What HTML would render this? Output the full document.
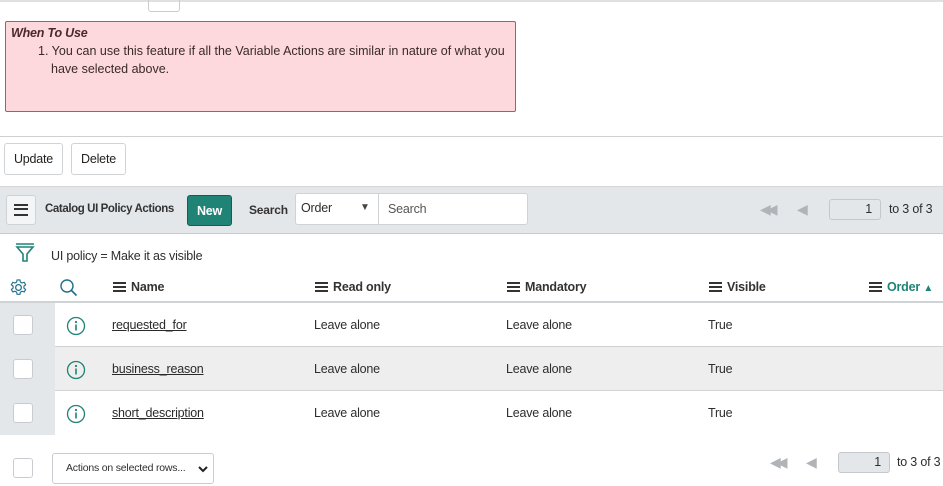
<!DOCTYPE html>
<html><head><meta charset="utf-8"><style>
*{box-sizing:border-box;margin:0;padding:0}
body{width:943px;height:486px;overflow:hidden;background:#fff;font-family:"Liberation Sans",sans-serif;font-size:12px;color:#2e2e2e;position:relative;letter-spacing:-0.2px}
.a{position:absolute}
.btn{position:absolute;border:1px solid #cfd3d6;border-radius:3px;background:#fff;font-size:12.5px;display:flex;align-items:center;justify-content:center;color:#222}
.cb{position:absolute;width:20px;height:20px;border:1px solid #c8ccd0;border-radius:3px;background:#fff}
.ham{display:inline-block;width:13px;height:10px;border-top:2px solid #333;border-bottom:2px solid #333;position:relative;vertical-align:-1px;margin-right:5px}
.ham:after{content:"";position:absolute;left:0;right:0;top:2px;border-top:2px solid #333}
.row{position:absolute;left:0;width:943px;height:44px;border-bottom:1px solid #cfd3d6}
.row span{position:absolute;top:15px;font-size:12.5px}
.lnk{text-decoration:underline;color:#2a2a2a}
.h{position:absolute;top:280px;font-weight:bold;font-size:12.5px;color:#333}
</style></head><body>
<div class="a" style="left:0;top:0;width:943px;height:2px;background:#e0e0e0"></div>
<div class="a" style="left:148px;top:0;width:32px;height:12px;border:1px solid #ccc;border-top:none;border-radius:0 0 3px 3px"></div>
<div class="a" style="left:5px;top:21px;width:511px;height:91px;background:#fdd8dc;border:1px solid #c95050;border-radius:2px">
<div class="a" style="left:5px;top:4px;font-style:italic;font-weight:bold;color:#4a2a2a;font-size:12.5px">When To Use</div>
<div class="a" style="left:32px;top:20px;color:#3a2a2a;line-height:18px;font-size:12.5px;letter-spacing:0">1. You can use this feature if all the Variable Actions are similar in nature of what you<br><span style="padding-left:13px">have selected above.</span></div>
</div>
<div class="a" style="left:0;top:136px;width:943px;height:1px;background:#d0d0d0"></div>
<div class="btn" style="left:4px;top:143px;width:59px;height:32px">Update</div>
<div class="btn" style="left:71px;top:143px;width:55px;height:32px">Delete</div>
<div class="a" style="left:0;top:186px;width:943px;height:48px;background:#e4e7ea;border-top:1px solid #d5d8db;border-bottom:1px solid #c8ccd0"></div>
<div class="btn" style="left:6px;top:195px;width:30px;height:30px;background:#f4f5f6"><span class="ham" style="margin:0;width:14px;height:12px"></span></div>
<div class="a" style="left:45px;top:203px;font-weight:bold;font-size:11.5px;color:#333;letter-spacing:-0.4px">Catalog UI Policy Actions</div>
<div class="btn" style="left:187px;top:195px;width:45px;height:31px;background:#1f8476;border-color:#165e54;color:#fff;font-weight:bold">New</div>
<div class="a" style="left:249px;top:203px;font-weight:bold;color:#333">Search</div>
<div class="a" style="left:295px;top:193px;width:233px;height:32px;background:#fff;border:1px solid #cfd3d6;border-radius:3px"></div>
<div class="a" style="left:378px;top:194px;width:1px;height:30px;background:#cfd3d6"></div>
<div class="a" style="left:301px;top:201px;font-size:12.5px">Order</div>
<div class="a" style="left:360px;top:202px;font-size:10px;color:#444">▼</div>
<div class="a" style="left:388px;top:202px;font-size:12.5px;color:#555">Search</div>
<div class="a" style="left:760px;top:201px;font-size:14px;color:#b0b4b8;letter-spacing:-4px">◀◀</div>
<div class="a" style="left:797px;top:201px;font-size:14px;color:#b0b4b8">◀</div>
<div class="a" style="left:829px;top:199px;width:52px;height:21px;border:1px solid #c4c8cc;border-radius:3px;background:#e4e7ea;text-align:right;padding:2px 8px 0 0;font-size:12.5px">1</div>
<div class="a" style="left:889px;top:202px;font-size:12.5px">to 3 of 3</div>
<svg class="a" style="left:14px;top:242px" width="22" height="24" viewBox="0 0 22 24"><path d="M2 2h18M3 5h16l-6 7v7h-4v-7z" fill="none" stroke="#1f8476" stroke-width="1.6"/></svg>
<div class="a" style="left:51px;top:249px;font-size:12.5px">UI policy = Make it as visible</div>
<svg class="a" style="left:9px;top:278px" width="19" height="19" viewBox="0 0 20 20"><circle cx="10" cy="10" r="3" fill="none" stroke="#1f6f8a" stroke-width="1.3"/><path d="M8.5 2h3l.5 2.3 1.8 1 2.2-.8 1.5 2.6-1.8 1.5v2l1.8 1.5-1.5 2.6-2.2-.8-1.8 1-.5 2.3h-3l-.5-2.3-1.8-1-2.2.8-1.5-2.6 1.8-1.5v-2L2.5 7.1 4 4.5l2.2.8 1.8-1z" fill="none" stroke="#1f6f8a" stroke-width="1.2"/></svg>
<svg class="a" style="left:59px;top:278px" width="20" height="20" viewBox="0 0 20 20"><circle cx="8" cy="8" r="6" fill="none" stroke="#1f6f8a" stroke-width="1.4"/><path d="M12.5 12.5l5 5" stroke="#1f6f8a" stroke-width="1.6"/></svg>
<div class="h" style="left:113px"><span class="ham"></span>Name</div>
<div class="h" style="left:315px"><span class="ham"></span>Read only</div>
<div class="h" style="left:507px"><span class="ham"></span>Mandatory</div>
<div class="h" style="left:709px"><span class="ham"></span>Visible</div>
<div class="h" style="left:869px;color:#1f8476"><span class="ham"></span>Order <span style="font-size:10px">▲</span></div>
<div class="a" style="left:0;top:301px;width:943px;height:2px;background:#cfd3d6"></div>
<div class="row" style="top:303px;background:#fff"><div class="a" style="left:0;top:0;width:55px;height:44px;background:#e4e7ea"></div><div class="cb" style="left:13px;top:12px"></div><svg class="a" style="left:66px;top:13px" width="20" height="20" viewBox="0 0 20 20"><circle cx="10" cy="10" r="8.5" fill="none" stroke="#1f8476" stroke-width="1.3"/><circle cx="10" cy="6" r="1.1" fill="#1f8476"/><path d="M10 8.5v6" stroke="#1f8476" stroke-width="1.6"/></svg><span class="lnk" style="left:112px">requested_for</span><span style="left:314px">Leave alone</span><span style="left:506px">Leave alone</span><span style="left:708px">True</span></div>
<div class="row" style="top:347px;background:#eeeeee"><div class="a" style="left:0;top:0;width:55px;height:44px;background:#e4e7ea"></div><div class="cb" style="left:13px;top:12px"></div><svg class="a" style="left:66px;top:13px" width="20" height="20" viewBox="0 0 20 20"><circle cx="10" cy="10" r="8.5" fill="none" stroke="#1f8476" stroke-width="1.3"/><circle cx="10" cy="6" r="1.1" fill="#1f8476"/><path d="M10 8.5v6" stroke="#1f8476" stroke-width="1.6"/></svg><span class="lnk" style="left:112px">business_reason</span><span style="left:314px">Leave alone</span><span style="left:506px">Leave alone</span><span style="left:708px">True</span></div>
<div class="row" style="top:391px;background:#fff;border-bottom:none"><div class="a" style="left:0;top:0;width:55px;height:44px;background:#e4e7ea"></div><div class="cb" style="left:13px;top:12px"></div><svg class="a" style="left:66px;top:13px" width="20" height="20" viewBox="0 0 20 20"><circle cx="10" cy="10" r="8.5" fill="none" stroke="#1f8476" stroke-width="1.3"/><circle cx="10" cy="6" r="1.1" fill="#1f8476"/><path d="M10 8.5v6" stroke="#1f8476" stroke-width="1.6"/></svg><span class="lnk" style="left:112px">short_description</span><span style="left:314px">Leave alone</span><span style="left:506px">Leave alone</span><span style="left:708px">True</span></div>
<div class="cb" style="left:13px;top:458px"></div>
<div class="a" style="left:52px;top:453px;width:162px;height:31px;border:1px solid #c8ccd0;border-radius:3px;font-size:10.5px;padding:8px 0 0 13px">Actions on selected rows...<svg class="a" style="left:145px;top:12px" width="10" height="7" viewBox="0 0 10 7"><path d="M1 1l4 4 4-4" fill="none" stroke="#222" stroke-width="2"/></svg></div>
<div class="a" style="left:770px;top:454px;font-size:14px;color:#b0b4b8;letter-spacing:-4px">◀◀</div>
<div class="a" style="left:806px;top:454px;font-size:14px;color:#b0b4b8">◀</div>
<div class="a" style="left:838px;top:452px;width:52px;height:21px;border:1px solid #c4c8cc;border-radius:3px;background:#e4e7ea;text-align:right;padding:2px 8px 0 0;font-size:12.5px">1</div>
<div class="a" style="left:897px;top:455px;font-size:12.5px">to 3 of 3</div>
</body></html>
